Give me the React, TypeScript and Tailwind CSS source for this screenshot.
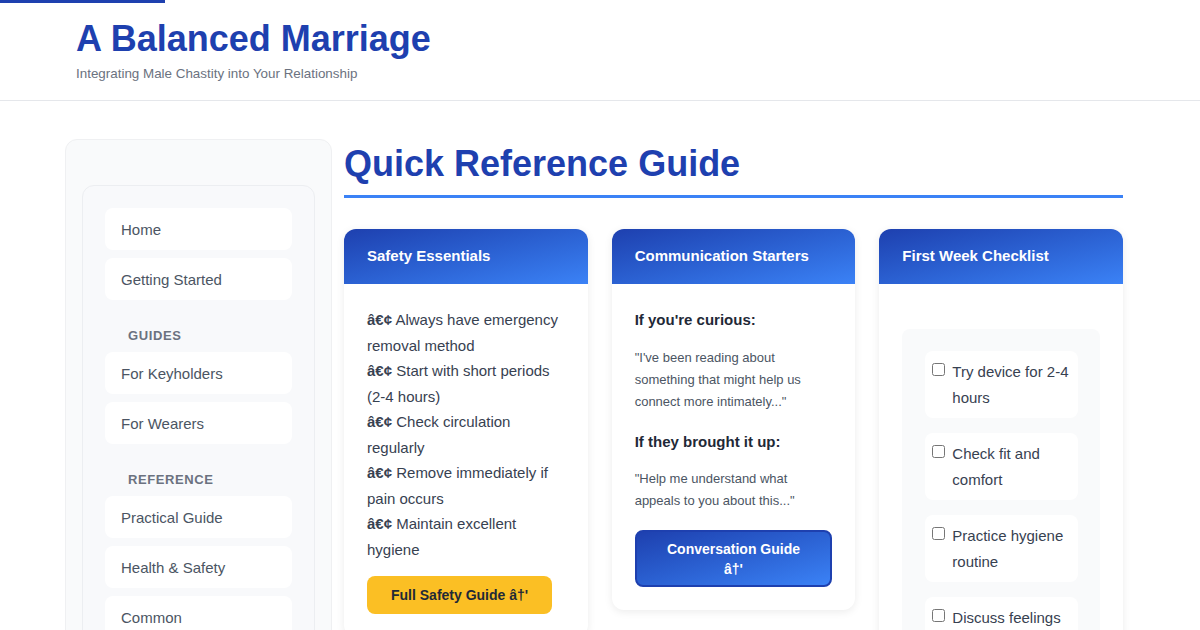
import React from 'react';

const NAV: { label?: string; items: string[] }[] = [
  { items: ['Home', 'Getting Started'] },
  { label: 'Guides', items: ['For Keyholders', 'For Wearers'] },
  { label: 'Reference', items: ['Practical Guide', 'Health & Safety', 'Common Misconceptions'] },
];

const SAFETY = [
  'Always have emergency removal method',
  'Start with short periods (2-4 hours)',
  'Check circulation regularly',
  'Remove immediately if pain occurs',
  'Maintain excellent hygiene',
];

const CHECKLIST = [
  'Try device for 2-4 hours',
  'Check fit and comfort',
  'Practice hygiene routine',
  'Discuss feelings together',
];

function CardHeader({ title }: { title: string }) {
  return (
    <div className="h-[55px] flex items-center px-[23px] rounded-t-xl bg-gradient-to-br from-[#1e40af] to-[#3b82f6]">
      <h3 className="text-[15px] font-bold text-white">{title}</h3>
    </div>
  );
}

function Sidebar() {
  return (
    <aside className="w-[267px] shrink-0 bg-[#f9fafb] border border-[#eff0f2] rounded-xl pt-[45px] px-4 pb-6">
      <nav className="bg-[#f8f9fb] border border-[#eceef1] rounded-xl p-[22px] flex flex-col gap-2">
        {NAV.map((group, gi) => (
          <React.Fragment key={gi}>
            {group.label && (
              <div className="pt-5 pl-[23px] text-[13px] leading-4 font-bold uppercase tracking-[0.6px] text-[#6b7280]">
                {group.label}
              </div>
            )}
            {group.items.map((item) => (
              <a
                key={item}
                href="#"
                className="py-[10.5px] px-4 bg-white rounded-lg text-[15px] leading-[21px] text-[#4b5563]"
              >
                {item}
              </a>
            ))}
          </React.Fragment>
        ))}
      </nav>
    </aside>
  );
}

export default function App() {
  return (
    <div className="min-h-screen bg-white font-['Liberation_Sans',Arial,sans-serif] text-[#374151]">
      <div className="h-[3px] w-[165px] bg-[#1e40af]" />
      <header className="border-b border-[#e5e7eb] pt-[15px] pb-[16px] pl-[76px]">
        <h1 className="text-[36px] leading-[41px] font-bold text-[#1e40af]">A Balanced Marriage</h1>
        <p className="mt-[5px] text-[13.4px] text-[#6b7280]">Integrating Male Chastity into Your Relationship</p>
      </header>

      <div className="flex gap-3 pt-[38px] pl-[65px] pr-[77px]">
        <Sidebar />

        <main className="flex-1 min-w-0">
          <h2 className="pt-[4px] pb-[11px] border-b-[3px] border-[#3b82f6] text-[36px] leading-[41px] font-bold text-[#1e40af]">
            Quick Reference Guide
          </h2>

          <div className="mt-[31px] grid grid-cols-3 gap-6 items-start">
            <section className="bg-white rounded-xl shadow-[0_2px_8px_rgba(0,0,0,0.08)]">
              <CardHeader title="Safety Essentials" />
              <div className="px-[23px] pt-[23px] pb-[23px]">
                <p className="text-[15px] leading-[25.5px] text-[#374151]">
                  {SAFETY.map((s, i) => (
                    <React.Fragment key={s}>
                      {i > 0 && <br />}
                      <strong className="font-bold">â€¢</strong> {s}
                    </React.Fragment>
                  ))}
                </p>
                <button className="mt-[14px] h-[38px] px-6 rounded-lg bg-[#fbbf24] text-[14px] font-bold text-[#1f2937]">
                  Full Safety Guide â†'
                </button>
              </div>
            </section>

            <section className="bg-white rounded-xl shadow-[0_2px_8px_rgba(0,0,0,0.08)]">
              <CardHeader title="Communication Starters" />
              <div className="px-[23px] pt-[23px] pb-[23px]">
                <h4 className="text-[15px] leading-[25.5px] font-bold text-[#1f2937]">If you're curious:</h4>
                <p className="mt-[14px] text-[13px] leading-[22px] text-[#4b5563]">
                  "I've been reading about something that might help us connect more intimately..."
                </p>
                <h4 className="mt-4 text-[15px] leading-[25.5px] font-bold text-[#1f2937]">If they brought it up:</h4>
                <p className="mt-[14px] text-[13px] leading-[22px] text-[#4b5563]">
                  "Help me understand what appeals to you about this..."
                </p>
                <button className="mt-[18px] w-full py-[6.5px] px-6 rounded-lg border-2 border-[#1e40af] bg-gradient-to-br from-[#1e40af] to-[#3b82f6] text-[14px] leading-5 font-bold text-white">
                  Conversation Guide â†'
                </button>
              </div>
            </section>

            <section className="bg-white rounded-xl shadow-[0_2px_8px_rgba(0,0,0,0.08)]">
              <CardHeader title="First Week Checklist" />
              <div className="px-[23px] pt-[45px] pb-[23px]">
                <ul className="bg-[#f9fafb] rounded-lg pt-[22px] pb-[21px] pl-[23px] pr-[22px] flex flex-col gap-[15px]">
                  {CHECKLIST.map((c) => (
                    <li key={c} className="bg-white rounded-lg py-2 pl-[7px] pr-2 flex items-start gap-[7px]">
                      <input type="checkbox" className="mt-1 w-[13px] h-[13px] shrink-0" />
                      <span className="text-[15px] leading-[25.5px] text-[#374151]">{c}</span>
                    </li>
                  ))}
                </ul>
              </div>
            </section>
          </div>
        </main>
      </div>
    </div>
  );
}
